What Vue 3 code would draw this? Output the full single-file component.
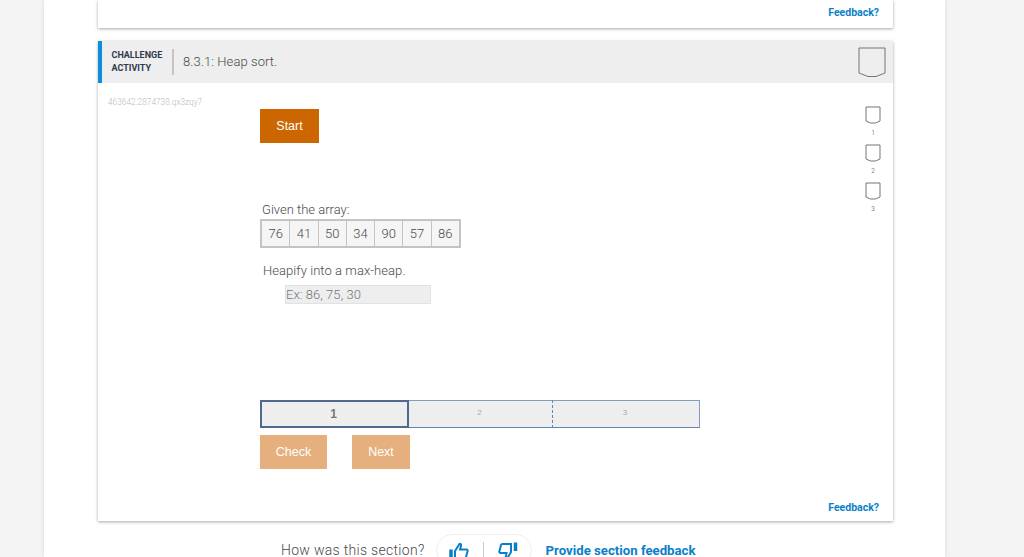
<script setup>
const nums = [76, 41, 50, 34, 90, 57, 86]
const levels = [1, 2, 3]
</script>

<template>
  <div class="page">
    <main class="column">
      <section class="card top-card">
        <a class="feedback">Feedback?</a>
      </section>

      <section class="card activity">
        <header class="head">
          <div class="label">CHALLENGE<br />ACTIVITY</div>
          <div class="title">8.3.1: Heap sort.</div>
          <svg class="chevron-big" width="28" height="31" viewBox="0 0 28 31">
            <path d="M1 1H27V26L18 29.500H10L1 26Z" fill="none" stroke="#757575" stroke-width="1" />
          </svg>
        </header>

        <div class="body">
          <div class="id">463642.2874738.qx3zqy7</div>

          <div class="center">
            <button class="btn start">Start</button>
            <p class="given">Given the array:</p>
            <div class="array">
              <span v-for="n in nums" :key="n" class="cell">{{ n }}</span>
            </div>
            <p class="heapify">Heapify into a max-heap.</p>
            <div class="input">Ex: 86, 75, 30</div>
            <div class="steps">
              <div class="step current">1</div>
              <div class="step s2">2</div>
              <div class="step s3">3</div>
            </div>
            <div class="actions">
              <button class="btn muted check">Check</button>
              <button class="btn muted next">Next</button>
            </div>
          </div>

          <div class="levels">
            <div v-for="l in levels" :key="l" class="level">
              <svg width="16" height="18" viewBox="0 0 16 18">
                <path d="M1 1H15V15L10.500 17H5.500L1 15Z" fill="none" stroke="#757575" stroke-width="1" />
              </svg>
              <span>{{ l }}</span>
            </div>
          </div>
        </div>

        <a class="feedback bottom">Feedback?</a>
      </section>

      <footer class="rate">
        <span class="how">How was this section?</span>
        <div class="thumbs">
          <svg width="20" height="20" viewBox="0 0 20 20" fill="none" stroke="#0a7fc9" stroke-width="2">
            <path d="M2 7.500V18" stroke-width="3.500" />
            <path d="M6 9L10.500 2C11.500 1.500 12.500 2.500 12 4L11 7.500H17.500C18.500 7.500 19 8.500 18.500 9.500L16.500 17C16.300 17.700 15.800 18 15 18H6Z" />
          </svg>
          <i class="sep"></i>
          <svg width="20" height="20" viewBox="0 0 20 20" fill="none" stroke="#0a7fc9" stroke-width="2">
            <path d="M17.500 0.500V9" stroke-width="3.500" />
            <path d="M13 2H4.500C3.700 2 3.200 2.300 3 3L1.500 9C1 10 1.500 11 2.500 11H8.500L8 14C7.500 15.500 8.500 16.500 9.500 16L13 10Z" />
          </svg>
        </div>
        <a class="provide">Provide section feedback</a>
      </footer>
    </main>
  </div>
</template>

<style scoped>
.page {
  height: 557px;
  overflow: hidden;
  background: #f4f4f4;
  padding-left: 44px;
  font-family: Roboto, sans-serif;
}
.column {
  width: 901px;
  height: 557px;
  box-sizing: border-box;
  background: #fff;
  padding: 0 52px 0 54px;
  box-shadow: 0 0 4px rgba(0, 0, 0, 0.12);
}
.card {
  background: #fff;
  box-shadow: 0 1px 3px rgba(0, 0, 0, 0.35);
}
.top-card {
  height: 28px;
  display: flex;
  justify-content: flex-end;
  align-items: flex-start;
}
.feedback {
  font-size: 10.500px;
  line-height: 12px;
  font-weight: 700;
  color: #0a7fc9;
  margin: 7px 14px 0 0;
}
.activity {
  margin-top: 13px;
  height: 480px;
  display: flex;
  flex-direction: column;
}
.head {
  height: 42px;
  background: #eee;
  border-left: 4px solid #0a8fdc;
  display: flex;
  align-items: center;
}
.label {
  width: 60px;
  padding-left: 9.500px;
  margin-right: 0.500px;
  font-size: 9px;
  line-height: 13px;
  font-weight: 700;
  color: #2d3b4a;
}
.title {
  border-left: 2px solid #c4c4c4;
  height: 26px;
  line-height: 26px;
  padding-left: 9px;
  font-size: 13px;
  font-weight: 300;
  color: #4a4a4a;
  flex: 1;
  letter-spacing: 0.08px;
}
.chevron-big {
  margin-right: 7px;
}
.body {
  display: flex;
  height: 411px;
}
.id {
  width: 152px;
  padding: 14px 0 0 10px;
  font-size: 8.300px;
  line-height: 10px;
  color: #bbb;
  font-weight: 300;
  white-space: nowrap;
}
.center {
  width: 440px;
  padding-top: 26px;
}
.btn {
  display: block;
  border: 0;
  padding: 0;
  height: 34px;
  color: #fff;
  font-family: "Liberation Sans", sans-serif;
  font-size: 12.500px;
  text-align: center;
}
.start {
  width: 59px;
  background: #cc6600;
}
.given {
  margin: 58px 0 0 2px;
  font-size: 13px;
  line-height: 18px;
  font-weight: 300;
  color: #4a4a4a;
}
.array {
  display: flex;
  border: 2px solid #c4c4c4;
  height: 29px;
  box-sizing: border-box;
  background: #f5f5f5;
  width: 201px;
}
.cell {
  flex: 1;
  text-align: center;
  font-size: 13px;
  line-height: 26px;
  font-weight: 300;
  color: #4a4a4a;
  border-left: 1px solid #c4c4c4;
}
.cell:first-child {
  border-left: 0;
}
.heapify {
  margin: 14px 0 0 3px;
  font-size: 13px;
  line-height: 18px;
  font-weight: 300;
  color: #4a4a4a;
  letter-spacing: 0.06px;
}
.input {
  margin: 5px 0 0 25px;
  width: 146px;
  height: 19px;
  box-sizing: border-box;
  background: #eee;
  border: 1px solid #dde3e6;
  font-size: 13px;
  line-height: 17px;
  font-weight: 300;
  color: #777;
  letter-spacing: 0.05px;
}
.steps {
  display: flex;
  margin-top: 96px;
  height: 28px;
  width: 440px;
  background: #eee;
  font-family: "Liberation Sans", sans-serif;
}
.step {
  box-sizing: border-box;
  text-align: center;
  font-size: 8px;
  line-height: 24px;
  color: #aaa;
  text-indent: -2px;
  border-top: 1px solid #7f9fc0;
  border-bottom: 1px solid #5f86ad;
}
.current {
  width: 149px;
  border: 2px solid #51698f;
  font-size: 12px;
  font-weight: 700;
  color: #777;
}
.s2 {
  width: 144px;
  border-right: 1px dashed #5f86ad;
}
.s3 {
  flex: 1;
  border-right: 1px solid #7f9fc0;
}
.actions {
  display: flex;
  gap: 25px;
  margin-top: 7px;
}
.muted {
  background: #e5b07d;
}
.check {
  width: 67px;
}
.next {
  width: 58px;
}
.levels {
  margin-left: auto;
  margin-right: 12px;
  padding-top: 23px;
  display: flex;
  flex-direction: column;
  width: 16px;
}
.level {
  height: 38px;
  display: flex;
  flex-direction: column;
  align-items: center;
  font-size: 6.500px;
  line-height: 8px;
  color: #888;
}
.level span {
  margin-top: 5px;
}
.bottom {
  align-self: flex-end;
  margin-top: 8px;
}
.rate {
  display: flex;
  align-items: center;
  margin-top: 16px;
  padding-left: 183px;
  height: 26px;
}
.how {
  font-size: 14px;
  font-weight: 300;
  color: #4a4a4a;
  letter-spacing: 0.3px;
}
.thumbs {
  margin-left: 11px;
  width: 96px;
  height: 32px;
  box-sizing: border-box;
  border: 1px solid #f0f0f0;
  border-radius: 16px;
  display: flex;
  align-items: center;
  justify-content: center;
  gap: 14px;
}
.thumbs svg {
  margin-top: 3px;
}
.sep {
  width: 1px;
  height: 16px;
  background: #ccc;
}
.provide {
  margin-left: 14px;
  font-size: 13.200px;
  font-weight: 700;
  color: #0a7fc9;
}
</style>

<style>
html, body {
  overflow: hidden;
}
</style>
